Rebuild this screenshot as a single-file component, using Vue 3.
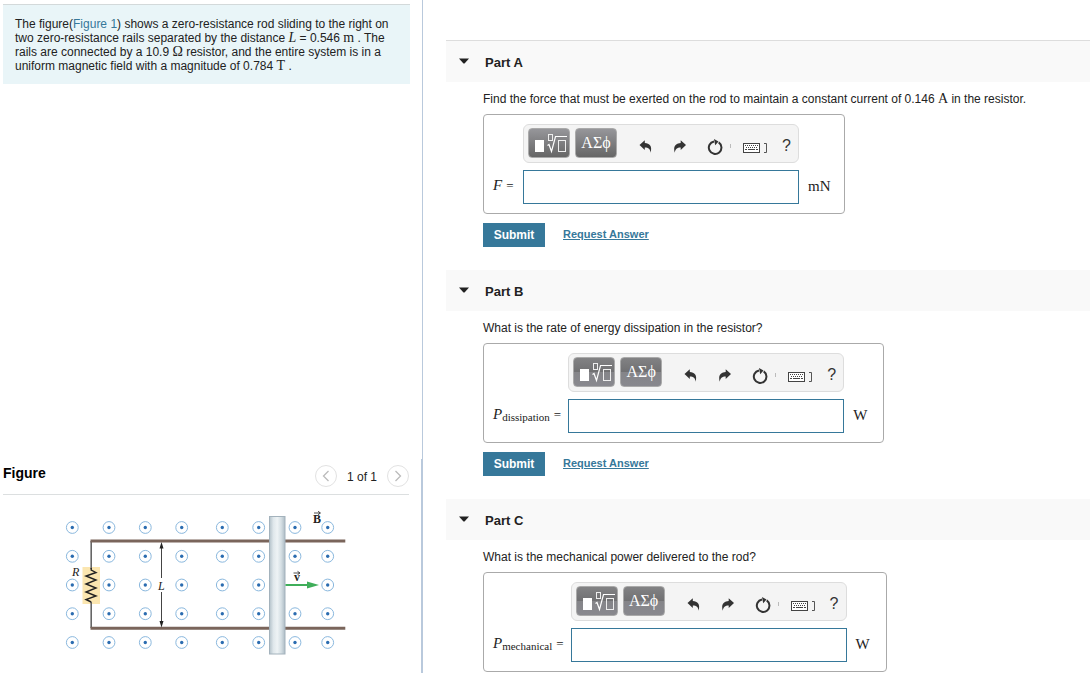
<template>
  <div class="page">
    <aside class="left">
      <div class="intro">
        The figure(<a href="#figure">Figure 1</a>) shows a zero-resistance rod sliding to the right on two
        zero-resistance rails separated by the distance <i class="math">L</i> = 0.546 <span class="math">m</span> . The
        rails are connected by a 10.9 <span class="math">Ω</span> resistor, and the entire system is in a uniform
        magnetic field with a magnitude of 0.784 <span class="math">T</span> .
      </div>

      <section id="figure" class="figure">
        <div class="figure_head">
          <h2>Figure</h2>
          <div class="pager">
            <button type="button" class="round" aria-label="Previous figure">
              <svg width="8" height="12" viewBox="0 0 8 12"><path d="M6.5 1 L1.5 6 L6.5 11" /></svg>
            </button>
            <span>1 of 1</span>
            <button type="button" class="round" aria-label="Next figure">
              <svg width="8" height="12" viewBox="0 0 8 12"><path d="M1.5 1 L6.5 6 L1.5 11" /></svg>
            </button>
          </div>
        </div>

        <svg class="circuit" width="290" height="150" viewBox="60 510 290 150">
          <defs>
            <linearGradient id="rod" x1="0" x2="1" y1="0" y2="0">
              <stop offset="0" stop-color="#b4c2ca" />
              <stop offset="0.25" stop-color="#dfe7eb" />
              <stop offset="0.5" stop-color="#eef3f5" />
              <stop offset="0.75" stop-color="#d5dfe4" />
              <stop offset="1" stop-color="#aebcc5" />
            </linearGradient>
          </defs>
          <!-- field lines coming out of the page -->
          <g v-for="(dot, i) in dots" :key="i">
            <circle :cx="dot.x" :cy="dot.y" r="5.9" fill="#fff" stroke="#8ab8de" stroke-width="1" />
            <circle :cx="dot.x" :cy="dot.y" r="1.7" fill="#2b6cb0" />
          </g>
          <!-- resistor -->
          <rect x="82.5" y="567" width="17.5" height="37" fill="#fbe6b0" />
          <path d="M91.2 541 V569 M91.2 602 V628" stroke="#666" stroke-width="1.6" fill="none" />
          <path
            d="M91.2 568 V570 L96 572.5 L86 576 L96 580 L86 584 L96 588 L86 592 L96 596 L86 599.5 L91.2 602"
            stroke="#222" stroke-width="1.4" fill="none"
          />
          <!-- rails and rod -->
          <path d="M90.5 541 H345.3 M90.5 628.3 H345.3" stroke="#7a655b" stroke-width="3" />
          <rect x="269.5" y="516.5" width="15.5" height="137.5" fill="url(#rod)" stroke="#a3b2bc" />
          <!-- distance L -->
          <path d="M161.5 546 V578 M161.5 592 V624" stroke="#444" stroke-width="1" />
          <path d="M161.5 542 l-2 6.5 h4 z M161.5 627.5 l-2 -6.5 h4 z" fill="#222" />
          <!-- velocity -->
          <path d="M285.5 585 H309" stroke="#3fae5a" stroke-width="2" />
          <path d="M307 581.5 L319 585 L307 588.5 Z" fill="#3fae5a" />
          <path d="M293.5 573 H299.5 M297.5 571.3 L300 573 L297.5 574.7" stroke="#222" stroke-width="0.8" fill="none" />
          <path d="M314 513 H320 M318 511.3 L320.5 513 L318 514.7" stroke="#222" stroke-width="0.8" fill="none" />
          <text class="it" x="72" y="576">R</text>
          <text class="it" x="158" y="590">L</text>
          <text class="vec" x="294" y="581">v</text>
          <text class="vec" x="313" y="523">B</text>
        </svg>
      </section>
    </aside>

    <main class="right">
      <section v-for="part in parts" :key="part.id" class="part">
        <h2 class="part_head">
          <svg width="10" height="6" viewBox="0 0 10 6"><path d="M0 0.5 H10 L6 5 Q5 6 4 5 Z" fill="#222" /></svg>
          {{ part.title }}
        </h2>
        <div class="part_body">
          <p class="question">
            {{ part.before }}
            <template v-if="part.symbol">{{ ' ' }}<span class="math">{{ part.symbol }}</span> {{ part.after }}</template>
          </p>

          <div class="answer">
            <label class="name" :for="part.id">
              <i>{{ part.letter }}</i><sub v-if="part.sub">{{ part.sub }}</sub><span class="eq">=</span>
            </label>
            <div class="entry">
              <div class="toolbar">
                <button type="button" class="dark" :class="{ split: part.split }" aria-label="Templates">
                  <svg width="36" height="22" viewBox="0 0 36 22">
                    <rect x="4" y="8" width="9" height="12" fill="#fff" />
                    <path d="M16.5 13.5 L18 12.5 L20.5 19.5 L24.5 4.5 H36" fill="none" stroke="#fff" stroke-width="1.2" />
                    <rect x="17.5" y="2.5" width="4" height="6" fill="none" stroke="#eee" />
                    <rect x="27.5" y="8.5" width="7" height="11" fill="none" stroke="#eee" />
                  </svg>
                </button>
                <button type="button" class="dark greek" :class="{ split: part.split }">ΑΣϕ</button>
                <button type="button" class="tool undo" aria-label="Undo">
                  <svg width="14" height="14" viewBox="0 0 14 14">
                    <path d="M0.5 5 L5.8 0.3 V3 C10.5 3.2 13.6 6.2 11.5 12.8 C11.4 9 9.5 7.6 5.8 7.5 V10 Z" fill="#333" />
                  </svg>
                </button>
                <button type="button" class="tool redo" aria-label="Redo">
                  <svg width="14" height="14" viewBox="0 0 14 14">
                    <path d="M13 5 L7.7 0.3 V3 C3 3.2 -0.1 6.2 1.7 12.8 C2.3 9 4 7.6 7.7 7.5 V10 Z" fill="#333" />
                  </svg>
                </button>
                <button type="button" class="tool reset" aria-label="Reset">
                  <svg width="16" height="16" viewBox="0 0 16 16">
                    <path d="M11.7 3.4 A6.3 6.3 0 1 1 7 2.4" fill="none" stroke="#333" stroke-width="2" />
                    <path d="M7 0 L11.5 2.6 L8.2 6.2 Z" fill="#333" />
                  </svg>
                </button>
                <button type="button" class="tool keys" aria-label="Keyboard shortcuts">
                  <svg width="38" height="14" viewBox="0 0 38 14">
                    <path d="M0.5 4 V8" stroke="#bbb" />
                    <rect x="13.5" y="3.5" width="16" height="9" fill="#fff" stroke="#444" />
                    <path d="M15 5.5 H28 M16 7.5 H28" stroke="#444" stroke-dasharray="1 1" />
                    <path d="M15 9.5 H17 M18 9.5 H25 M26 9.5 H28" stroke="#444" />
                    <path d="M34 3.5 H36.5 V12.5 H34" fill="none" stroke="#555" />
                  </svg>
                </button>
                <button type="button" class="tool help" aria-label="Help">?</button>
              </div>
              <input :id="part.id" v-model="answers[part.id]" type="text" autocomplete="off">
            </div>
            <span class="unit">{{ part.unit }}</span>
          </div>

          <div v-if="part.actions" class="actions">
            <button type="button" class="submit">Submit</button>
            <a href="#">Request Answer</a>
          </div>
        </div>
      </section>
    </main>
  </div>
</template>

<script setup>
import { ref } from 'vue';

const answers = ref({ a: '', b: '', c: '' });

const parts = [
  {
    id: 'a',
    title: 'Part A',
    before: 'Find the force that must be exerted on the rod to maintain a constant current of 0.146',
    symbol: 'A',
    after: 'in the resistor.',
    letter: 'F',
    unit: 'mN',
    actions: true
  },
  {
    id: 'b',
    title: 'Part B',
    before: 'What is the rate of energy dissipation in the resistor?',
    letter: 'P',
    sub: 'dissipation',
    unit: 'W',
    split: true,
    actions: true
  },
  {
    id: 'c',
    title: 'Part C',
    before: 'What is the mechanical power delivered to the rod?',
    letter: 'P',
    sub: 'mechanical',
    unit: 'W',
    split: true,
    actions: false
  }
];

// the velocity arrow takes the place of one dot in the middle row
const columns = [72.3, 109, 145.3, 181.7, 222.3, 258.7, 295, 327.7];
const rows = [527.5, 556.3, 585, 613.7, 642.5];
const dots = rows.flatMap((y, r) =>
  columns.filter((x, c) => !(r === 2 && c === 6)).map(x => ({ x, y }))
);
</script>

<style>
body {
  margin: 0;
  background: #fff;
}
</style>

<style scoped>
* {
  box-sizing: border-box;
}

.page {
  display: grid;
  grid-template-columns: minmax(320px, 423px) 1fr;
  min-height: 100vh;
  font-family: "Liberation Sans", Arial, sans-serif;
  font-size: 12px;
  line-height: 14px;
  color: #222;
}

button {
  font-family: inherit;
  padding: 0;
  border: none;
  background: none;
  cursor: pointer;
}

.left {
  display: flex;
  flex-direction: column;
  justify-content: space-between;
  border-right: 1px solid #b9c9dc;
}

.intro {
  margin: 4px 12px 0 3px;
  padding: 12px 16px 11px 12px;
  border-top: 1px solid #d3d9da;
  background: #e9f5f8;
}

.intro a {
  color: #36789a;
  text-decoration: none;
}

.math {
  font-family: "Liberation Serif", "Times New Roman", serif;
  font-size: 14px;
  line-height: 12px;
}

.figure {
  padding: 6px 12px 13px 3px;
  border-right: 1px solid #b9c9dc;
}

.figure_head {
  display: flex;
  justify-content: space-between;
  height: 30px;
  border-bottom: 1px solid #dcdfe0;
}

.figure_head h2 {
  margin: 0;
  font-size: 14px;
  line-height: 16px;
  color: #000;
}

.pager {
  display: flex;
  height: 22px;
  gap: 10px;
  align-items: center;
}

.pager span {
  padding-top: 2px;
}

.round {
  display: flex;
  align-items: center;
  justify-content: center;
  width: 22px;
  height: 22px;
  border: 1px solid #e2e2e2;
  border-radius: 50%;
}

.round path {
  fill: none;
  stroke: #bbb;
  stroke-width: 1.3;
}

.circuit {
  display: block;
  margin: 15px 0 0 57px;
}

.circuit text {
  font-family: "Liberation Serif", "Times New Roman", serif;
  fill: #222;
}

.it {
  font-size: 12px;
  font-style: italic;
}

.vec {
  font-size: 12px;
  font-weight: bold;
}

.right {
  padding: 40px 0 0 23px;
}

.part:first-child {
  border-top: 1px solid #ddd;
}

.part_head {
  display: flex;
  align-items: center;
  gap: 16px;
  height: 41px;
  margin: 0;
  padding: 2px 0 0 13px;
  background: #f9f9f9;
  font-size: 13px;
}

.part_head svg {
  margin-bottom: 3px;
}

.part_body {
  padding: 10px 20px 23px 37px;
}

.question {
  margin: 0 0 8px;
}

.answer {
  display: flex;
  align-items: flex-end;
  width: fit-content;
  padding: 9px 13px 9px 9px;
  border: 1px solid #aaa;
  border-radius: 4px;
}

.name {
  display: flex;
  align-items: baseline;
  min-width: 30px;
  padding: 0 7px 10px 0;
  font-family: "Liberation Serif", "Times New Roman", serif;
  font-size: 15px;
  line-height: 16px;
}

.name sub {
  position: relative;
  top: 2px;
  font-size: 11px;
  line-height: 12px;
}

.eq {
  margin-left: 4px;
  font-size: 13px;
}

.entry {
  width: 276px;
}

.toolbar {
  display: flex;
  align-items: center;
  height: 39px;
  margin-bottom: 7px;
  padding: 0 7px 1px 4px;
  border: 1px solid #ddd;
  border-radius: 6px;
  background: #f4f4f4;
}

.dark {
  width: 42px;
  height: 30px;
  margin-right: 5px;
  border: 1px solid #aaa;
  border-radius: 4px;
  background: linear-gradient(#96969a, #666);
  color: #fff;
}

.dark.split {
  background: linear-gradient(#828284 0, #707072 50%, #858589 50%, #88888e 100%);
}

.dark svg {
  display: block;
  margin: 0 auto;
}

.greek {
  font-family: "Liberation Serif", "Times New Roman", serif;
  font-size: 16px;
}

.tool {
  padding-top: 8px;
}

.tool svg {
  display: block;
}

.undo {
  margin-left: 17px;
}

.redo,
.reset {
  margin-left: 20px;
}

.keys {
  margin-left: 7px;
}

.help {
  margin-left: 14px;
  padding-top: 6px;
  font-size: 16px;
  color: #333;
}

.entry input {
  display: block;
  width: 100%;
  height: 34px;
  padding: 0 8px;
  border: 1px solid #36789a;
  outline: none;
  font-size: 14px;
}

.unit {
  min-width: 26px;
  padding: 0 0 10px 9px;
  font-family: "Liberation Serif", "Times New Roman", serif;
  font-size: 15px;
  line-height: 16px;
}

.actions {
  display: flex;
  align-items: center;
  gap: 18px;
  margin-top: 9px;
}

.submit {
  width: 62px;
  height: 24px;
  background: #36789a;
  color: #fff;
  font-size: 12px;
  font-weight: bold;
}

.actions a {
  padding-bottom: 2px;
  color: #36789a;
  font-size: 11px;
  font-weight: bold;
}

.part:last-child .part_body {
  padding-bottom: 0;
}
</style>
